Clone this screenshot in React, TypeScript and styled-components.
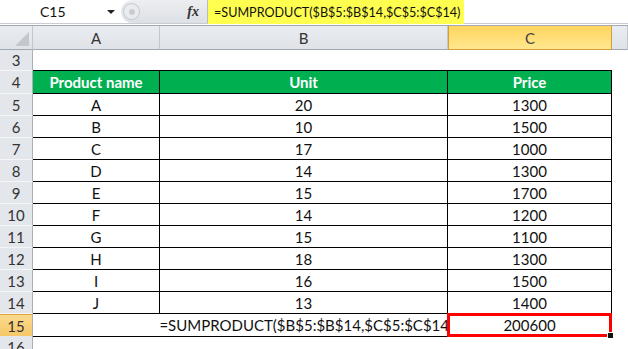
import styled, { createGlobalStyle, css } from 'styled-components';

const GlobalStyle = createGlobalStyle`
  html, body {
    margin: 0;
    padding: 0;
    background: #ffffff;
  }
  body {
    font-family: Lato, "Open Sans", "Liberation Sans", sans-serif;
    color: #111;
  }
`;

const COLS = '33px 127px 288px 164px 1fr';

const Page = styled.div`
  width: 628px;
  height: 349px;
  overflow: hidden;
  background: #fff;
`;

const FormulaBar = styled.div`
  height: 23px;
  display: flex;
  border-bottom: 1px solid #c9cdd3;
  font-size: 14px;
`;

const NameBox = styled.div`
  width: 121px;
  display: flex;
  align-items: center;
  padding-left: 40px;
  box-sizing: border-box;
  position: relative;
  color: #111;
`;

const Caret = styled.span`
  position: absolute;
  left: 107px;
  top: 10px;
  width: 0;
  height: 0;
  border-left: 4px solid transparent;
  border-right: 4px solid transparent;
  border-top: 4px solid #222;
`;

const ButtonArea = styled.div`
  width: 87px;
  background: linear-gradient(#eceef1, #dde0e5);
  border-radius: 12px 0 0 12px;
  border-right: 1px solid #b9bec6;
  display: flex;
  align-items: center;
  justify-content: space-between;
  padding: 0 8px 0 2px;
  box-sizing: border-box;
`;

const RoundKnob = styled.span`
  width: 17px;
  height: 17px;
  border-radius: 50%;
  border: 1px solid #c3c7cd;
  background: #e9ebee;
  box-sizing: border-box;
  display: flex;
  align-items: center;
  justify-content: center;
  &::after {
    content: '';
    width: 6px;
    height: 6px;
    border-radius: 50%;
    background: #c8ccd2;
  }
`;

const Fx = styled.span`
  font-family: "Liberation Serif", "DejaVu Serif", serif;
  font-style: italic;
  font-weight: bold;
  font-size: 14px;
  color: #333;
`;

const FormulaInput = styled.div`
  flex: 1;
  display: flex;
  align-items: stretch;
`;

const Highlight = styled.span`
  background: #ffff4f;
  display: flex;
  align-items: center;
  padding: 0 4px 0 6px;
  margin-bottom: -1px;
  font-size: 12.6px;
  color: #111;
`;

const HeaderGap = styled.div`
  height: 1px;
  border-bottom: 1px solid #a3aab4;
`;

const Row = styled.div<{ h: number }>`
  display: grid;
  grid-template-columns: ${COLS};
  height: ${({ h }) => h}px;
  font-size: 15px;
`;

const ColHeader = styled.div<{ selected?: boolean }>`
  box-sizing: border-box;
  display: flex;
  align-items: center;
  justify-content: center;
  color: #333;
  background: linear-gradient(#e9ecf0, #dfe2e7);
  border-right: 1px solid #c3c8cf;
  border-bottom: 1px solid #a0a8b3;
  ${({ selected }) =>
    selected &&
    css`
      background: linear-gradient(#ffd55f, #ffe78f);
      border: 1px solid #d79c3c;
      border-top: none;
      color: #444;
    `}
`;

const Corner = styled(ColHeader)`
  justify-content: flex-end;
  align-items: flex-end;
  padding: 0 3px 3px 0;
`;

const RowHeader = styled.div<{ selected?: boolean }>`
  box-sizing: border-box;
  display: flex;
  align-items: center;
  justify-content: center;
  color: #333;
  background: #e3e6eb;
  border-right: 1px solid #a9b0ba;
  border-bottom: 1px solid #f4f5f7;
  ${({ selected }) =>
    selected &&
    css`
      background: linear-gradient(#fbd98d, #f5c868);
      border-bottom: 1px solid #e0a441;
      border-top: 1px solid #e0a441;
    `}
`;

const Cell = styled.div<{ edge?: 'top' | 'body' | 'head'; span?: number }>`
  box-sizing: border-box;
  display: flex;
  align-items: center;
  justify-content: center;
  white-space: nowrap;
  ${({ span }) => span && css`grid-column: span ${span};`}
  ${({ edge }) =>
    edge === 'top' &&
    css`
      border-bottom: 1px solid #000;
    `}
  ${({ edge }) =>
    (edge === 'body' || edge === 'head') &&
    css`
      border-bottom: 1px solid #000;
      border-right: 1px solid #000;
    `}
  ${({ edge }) =>
    edge === 'head' &&
    css`
      background: #00b050;
      color: #fff;
      font-weight: bold;
    `}
`;

const OverflowCell = styled(Cell)`
  overflow: hidden;
  justify-content: flex-end;
`;

const ClippedText = styled.span`
  margin-right: -6px;
`;

const ActiveCell = styled.div`
  position: relative;
  box-sizing: border-box;
  display: flex;
  align-items: center;
  justify-content: center;
  border: 3px solid #ff0000;
  margin: -1px 0 0 -1px;
`;

const FillHandle = styled.span`
  position: absolute;
  right: -5px;
  bottom: -5px;
  width: 5px;
  height: 5px;
  background: #111;
  border: 1px solid #fff;
`;

const data: [string, number, number][] = [
  ['A', 20, 1300],
  ['B', 10, 1500],
  ['C', 17, 1000],
  ['D', 14, 1300],
  ['E', 15, 1700],
  ['F', 14, 1200],
  ['G', 15, 1100],
  ['H', 18, 1300],
  ['I', 16, 1500],
  ['J', 13, 1400],
];

export default function App() {
  return (
    <Page>
      <GlobalStyle />
      <FormulaBar>
        <NameBox>
          C15
          <Caret />
        </NameBox>
        <ButtonArea>
          <RoundKnob />
          <Fx>fx</Fx>
        </ButtonArea>
        <FormulaInput>
          <Highlight>=SUMPRODUCT($B$5:$B$14,$C$5:$C$14)</Highlight>
        </FormulaInput>
      </FormulaBar>
      <HeaderGap />

      <Row h={24}>
        <Corner>
          <svg width="14" height="14" viewBox="0 0 14 14">
            <polygon points="14,0 14,14 0,14" fill="#c4c8ce" />
          </svg>
        </Corner>
        <ColHeader>A</ColHeader>
        <ColHeader>B</ColHeader>
        <ColHeader selected>C</ColHeader>
        <ColHeader />
      </Row>

      <Row h={21}>
        <RowHeader>3</RowHeader>
        <Cell edge="top" />
        <Cell edge="top" />
        <Cell edge="top" />
        <Cell />
      </Row>

      <Row h={23}>
        <RowHeader>4</RowHeader>
        <Cell edge="head">Product name</Cell>
        <Cell edge="head">Unit</Cell>
        <Cell edge="head">Price</Cell>
        <Cell />
      </Row>

      {data.map(([name, unit, price], i) => (
        <Row h={22} key={name}>
          <RowHeader>{i + 5}</RowHeader>
          <Cell edge="body">{name}</Cell>
          <Cell edge="body">{unit}</Cell>
          <Cell edge="body">{price}</Cell>
          <Cell />
        </Row>
      ))}

      <Row h={22}>
        <RowHeader selected>15</RowHeader>
        <OverflowCell edge="body" span={2}>
          <ClippedText>=SUMPRODUCT($B$5:$B$14,$C$5:$C$14)</ClippedText>
        </OverflowCell>
        <ActiveCell>
          200600
          <FillHandle />
        </ActiveCell>
        <Cell />
      </Row>

      <Row h={22}>
        <RowHeader>16</RowHeader>
        <Cell />
        <Cell />
        <Cell />
        <Cell />
      </Row>
    </Page>
  );
}
